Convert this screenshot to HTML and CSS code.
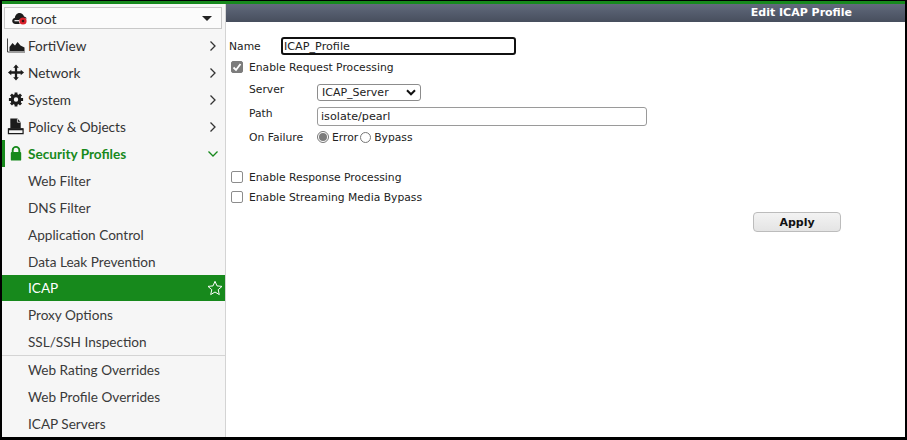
FILE: index.html
```html
<!DOCTYPE html>
<html lang="en">
<head>
<meta charset="utf-8">
<title>Edit ICAP Profile</title>
<link rel="stylesheet" href="styles.css">
</head>
<body>
<div class="frame">
  <div class="accent"></div>
  <div class="app">
    <nav class="sidebar">
      <div class="vdom">
        <svg class="cloud" viewBox="0 0 16 13" width="16" height="13"><path d="M3.500 12C1.300 12 .2 10.500 .2 9c0-1.600 1.100-2.800 2.600-3C3.100 3.300 5 1 7.500 1c2.200 0 3.900 1.400 4.500 3.400 1.200.2 2.200 1 2.800 2H10c-1.700 0-3 1.300-3 3 0 1 .4 1.900 1 2.600z" fill="#1c1c1c"/><path d="M2.500 8.700h4.500" stroke="#fff" stroke-width="1.200"/><circle cx="11" cy="9" r="3.600" fill="#d9202a"/><circle cx="11" cy="9" r="1.300" fill="#3a1010"/></svg>
        <span class="vdom-name">root</span>
        <span class="caret"></span>
      </div>
      <ul class="menu">
        <li class="item"><svg class="ico" viewBox="0 0 18 16"><path d="M.5 1v13.500H18" fill="none" stroke="#444" stroke-width="1"/><path d="M2.500 13.500V9.500l3-4 2.500 2.500 2.500-3.500 3 3.500 4 2v3.500z" fill="#1c1c1c"/></svg><span>FortiView</span><svg class="chev" viewBox="0 0 8 12"><path d="M1.500 1.500 6 6l-4.500 4.500" fill="none" stroke="#333" stroke-width="1.300"/></svg></li>
        <li class="item"><svg class="ico" viewBox="0 0 18 18"><path d="M9 .5 12 4H10.200v3.800H14V6l3.500 3-3.500 3v-1.800h-3.800V14H12l-3 3.500L6 14h1.800v-3.800H4V12L.5 9 4 6v1.800h3.800V4H6z" fill="#1c1c1c"/></svg><span>Network</span><svg class="chev" viewBox="0 0 8 12"><path d="M1.500 1.500 6 6l-4.500 4.500" fill="none" stroke="#333" stroke-width="1.300"/></svg></li>
        <li class="item"><svg class="ico" viewBox="0 0 18 18"><circle cx="9" cy="9" r="4" fill="none" stroke="#1c1c1c" stroke-width="3.400"/><path d="M9 1.500v3M9 13.500v3M1.500 9h3M13.500 9h3M3.700 3.700l2.100 2.100M12.200 12.200l2.100 2.100M3.700 14.300l2.100-2.100M12.200 5.800l2.100-2.100" stroke="#1c1c1c" stroke-width="3"/></svg><span>System</span><svg class="chev" viewBox="0 0 8 12"><path d="M1.500 1.500 6 6l-4.500 4.500" fill="none" stroke="#333" stroke-width="1.300"/></svg></li>
        <li class="item"><svg class="ico" viewBox="0 0 18 18"><path d="M3 .5h7.500L14 4.500V11H3z" fill="#1c1c1c"/><path d="M10.500 1v3.500H14" fill="none" stroke="#f6f6f6" stroke-width=".8"/><path d="M1 11.500h15.500v5H1z" fill="none" stroke="#1c1c1c" stroke-width="1.300"/><path d="M1 11h15.500v2H1z" fill="#1c1c1c"/></svg><span>Policy &amp; Objects</span><svg class="chev" viewBox="0 0 8 12"><path d="M1.500 1.500 6 6l-4.500 4.500" fill="none" stroke="#333" stroke-width="1.300"/></svg></li>
        <li class="item section"><svg class="ico" viewBox="0 0 18 18"><path d="M5.500 8V5.500a3.500 3.500 0 0 1 7 0V8" fill="none" stroke="#17891c" stroke-width="2"/><rect x="3.500" y="7.500" width="11" height="9" rx="1" fill="#17891c"/></svg><span>Security Profiles</span><svg class="chev-down" viewBox="0 0 12 8"><path d="M1.500 1.500 6 6l4.500-4.500" fill="none" stroke="#17891c" stroke-width="1.300"/></svg></li>
        <li class="item sub">Web Filter</li>
        <li class="item sub">DNS Filter</li>
        <li class="item sub">Application Control</li>
        <li class="item sub">Data Leak Prevention</li>
        <li class="item sub active"><span>ICAP</span><svg class="star" viewBox="0 0 16 16"><path d="M8 1.300 10 5.900l5 .5-3.800 3.300 1.100 4.900L8 12l-4.300 2.600 1.100-4.900L1 6.400l5-.5z" fill="none" stroke="#fff" stroke-width="1"/></svg></li>
        <li class="item sub">Proxy Options</li>
        <li class="item sub divided">SSL/SSH Inspection</li>
        <li class="item sub">Web Rating Overrides</li>
        <li class="item sub">Web Profile Overrides</li>
        <li class="item sub">ICAP Servers</li>
      </ul>
    </nav>
    <main class="content">
      <header class="titlebar">Edit ICAP Profile</header>
      <form class="form">
        <div class="name-row">
          <label class="name-label" for="name">Name</label>
          <input class="name-input" id="name" type="text" value="ICAP_Profile">
        </div>
        <label class="check-row request-check"><span class="box checked"><svg viewBox="0 0 12 12" width="12" height="12"><path d="M2.500 6.500 5 9l4.500-6" fill="none" stroke="#fff" stroke-width="1.800"/></svg></span>Enable Request Processing</label>
        <div class="request">
          <div class="field server-field"><span class="field-label">Server</span><span class="select">ICAP_Server<svg class="sel-chev" viewBox="0 0 10 7" width="10" height="7"><path d="M1 1.300 5 5.300l4-4" fill="none" stroke="#111" stroke-width="2"/></svg></span></div>
          <div class="field path-field"><span class="field-label">Path</span><input class="path-input" type="text" value="isolate/pearl"></div>
          <div class="field fail-field"><span class="field-label">On Failure</span><span class="radio on"></span><span class="radio-text">Error</span><span class="radio second"></span><span class="radio-text">Bypass</span></div>
        </div>
        <label class="check-row response"><span class="box"></span>Enable Response Processing</label>
        <label class="check-row streaming"><span class="box"></span>Enable Streaming Media Bypass</label>
        <div class="actions"><button class="apply" type="button">Apply</button></div>
      </form>
    </main>
  </div>
</div>
</body>
</html>
```
FILE: styles.css
```css
* { box-sizing: border-box; }
html, body { margin: 0; padding: 0; }
body { width: 907px; height: 440px; background: #000; overflow: hidden; }
.frame { width: 907px; height: 440px; padding: 1px 2px 3px 2px; display: flex; flex-direction: column; background: #000; }
.accent { height: 3px; background: #16891d; flex: none; }
.app { flex: 1; display: flex; min-height: 0; background: #fff; }

.sidebar { width: 224px; flex: none; background: #f6f6f6; border-right: 1px solid #d4d4d4; font-family: Lato, sans-serif; font-size: 13.6px; color: #333; }
.vdom { height: 22px; margin: 3px 3px 0 2px; border: 1px solid #c8c8c8; background: #fbfbfb; display: flex; align-items: center; padding-left: 7px; padding-right: 9px; font-size: 14px; }
.cloud { flex: none; margin-right: 3px; }
.vdom-name { flex: 1; }
.caret { width: 0; height: 0; border-left: 5px solid transparent; border-right: 5px solid transparent; border-top: 5px solid #222; }
.menu { list-style: none; margin: 0; padding: 3px 0 0; }
.item { height: 27px; display: flex; align-items: center; position: relative; padding-left: 26px; white-space: nowrap; }
.ico { position: absolute; left: 5px; top: 5px; width: 18px; height: 17px; }
.chev { position: absolute; left: 207px; top: 8px; width: 8px; height: 12px; }
.chev-down { position: absolute; left: 205px; top: 10px; width: 12px; height: 8px; }
.section { color: #17891c; font-weight: 700; border-left: 3px solid #17891c; padding-left: 23px; }
.section .ico { left: 2px; }
.section .chev-down { left: 202px; }
.sub { color: #3a3a3a; }
.active { background: #17891c; color: #fff; height: 26px; }
.star { position: absolute; right: 2px; top: 5px; width: 16px; height: 16px; }
.divided { border-bottom: 1px solid #d4d4d4; height: 28px; }

.content { flex: 1; min-width: 0; font-family: "DejaVu Sans", sans-serif; font-size: 10.75px; color: #222; display: flex; flex-direction: column; }
.titlebar { height: 18px; flex: none; background: linear-gradient(#616a7c, #474e5d); color: #fff; font-weight: 700; font-size: 11px; line-height: 18px; text-align: right; padding-right: 53px; }
.form { flex: 1; position: relative; padding: 15px 0 0 3px; }
.name-row { display: flex; align-items: center; height: 18px; }
.name-label { width: 52px; }
.name-input { width: 235px; height: 18px; border: 2px solid #111; border-radius: 3px; padding: 0 1px; font: 11.2px "DejaVu Sans", sans-serif; color: #222; background: #fff; outline: none; }
.check-row { display: flex; align-items: center; height: 14px; }
.request-check { margin-top: 5px; }
.box { width: 12px; height: 12px; border: 1px solid #8c8c8c; border-radius: 2px; background: #fff; margin: 0 6px 0 2px; flex: none; display: block; }
.box svg { display: block; margin: -1px; }
.checked { background: #7c7c7c; border-color: #7c7c7c; }
.request { padding-left: 20px; }
.field { display: flex; align-items: center; }
.field-label { width: 68px; flex: none; white-space: nowrap; }
.server-field { margin-top: 9px; height: 18px; }
.server-field .field-label { margin-top: -5px; }
.select { width: 104px; height: 17px; border: 1px solid #8c8c8c; border-radius: 3px; background: #fff; padding-left: 4px; display: flex; align-items: center; justify-content: space-between; padding-right: 4px; font-size: 11px; }
.sel-chev { flex: none; }
.path-field { margin-top: 6px; height: 18px; }
.path-field .field-label { margin-top: -5px; }
.path-input { width: 330px; height: 19px; border: 1px solid #9a9a9a; border-radius: 3px; padding: 0 3px; font: 11.2px "DejaVu Sans", sans-serif; color: #222; background: #fff; outline: none; }
.fail-field { margin-top: 5px; height: 14px; }
.radio { width: 12px; height: 12px; border: 1px solid #777; border-radius: 50%; background: #fff; flex: none; position: relative; display: block; }
.second { width: 11px; height: 11px; margin-left: 2px; }
.on::after { content: ""; display: block; width: 8px; height: 8px; margin: 1px; border-radius: 50%; background: #7c7c7c; }
.radio-text { margin-left: 3px; }
.response { margin-top: 26px; }
.streaming { margin-top: 6px; }
.actions { position: absolute; left: 527px; top: 190px; }
.apply { width: 88px; height: 20px; border: 1px solid #bcbcbc; border-radius: 4px; background: linear-gradient(#f3f3f3, #e4e4e4); font: 700 11px "DejaVu Sans", sans-serif; color: #111; padding: 0; }
```
